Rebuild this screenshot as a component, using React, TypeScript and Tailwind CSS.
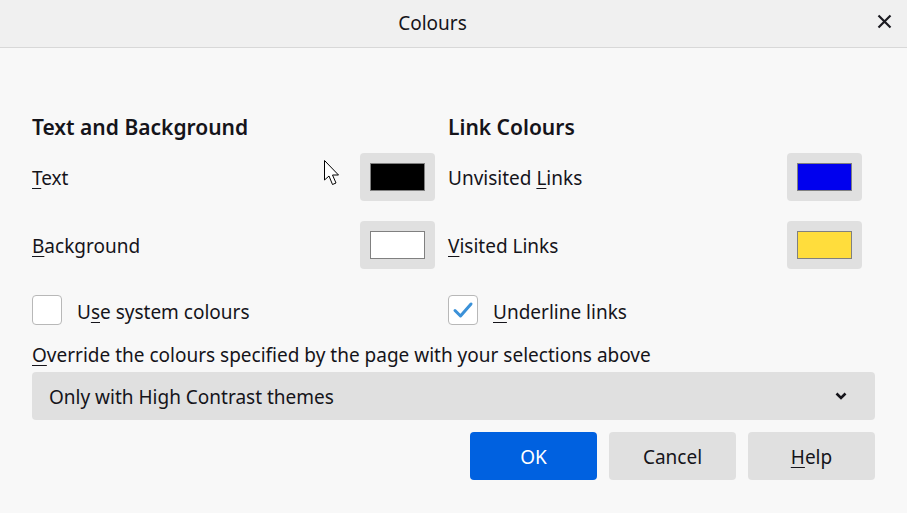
import React from 'react';

const FONT = { fontFamily: '"Noto Sans", "Open Sans", sans-serif' };

const Swatch = ({ color }: { color: string }) => (
  <button className="flex h-12 w-[75px] items-center justify-center rounded bg-[#e0e0e0] mr-[13px]">
    <span className="block h-[28px] w-[55px] border border-[#808080]" style={{ backgroundColor: color }} />
  </button>
);

const Checkbox = ({ checked }: { checked?: boolean }) => (
  <span className="flex h-[30px] w-[30px] items-center justify-center rounded border border-[#b8b8b8] bg-white">
    {checked && (
      <svg width="22" height="18" viewBox="0 0 22 18" fill="none">
        <path d="M3 9.5 L8.5 15 L19 3" stroke="#3b91d8" strokeWidth="3" strokeLinecap="round" strokeLinejoin="round" />
      </svg>
    )}
  </span>
);

const ColourRow = ({ label, color }: { label: React.ReactNode; color: string }) => (
  <div className="flex h-12 items-center justify-between">
    <span className="pt-[3px]">{label}</span>
    <Swatch color={color} />
  </div>
);

const App = () => {
  return (
    <div className="relative h-[513px] w-[907px] overflow-hidden bg-[#f8f8f8] text-[19px] text-[#15141a]" style={FONT}>
      {/* Title bar */}
      <div className="relative flex h-12 items-center justify-center border-b border-[#d8d8d8] bg-[#f0f0f0] pr-[42px]">
        <span className="text-[19px]">Colours</span>
        <button className="absolute right-[15px] top-[14px]">
          <svg width="15" height="15" viewBox="0 0 15 15">
            <path d="M1.5 1.5 L13.5 13.5 M13.5 1.5 L1.5 13.5" stroke="#1c1b22" strokeWidth="2.2" />
          </svg>
        </button>
      </div>

      <main className="px-8 pt-[64px]">
        <div className="grid grid-cols-[416px_1fr]">
          <section>
            <h2 className="mb-[11px] text-[21px] font-semibold leading-[30px]">Text and Background</h2>
            <ColourRow label={<><u className="underline-offset-[3px]">T</u>ext</>} color="#000000" />
            <div className="h-5" />
            <ColourRow label={<><u className="underline-offset-[3px]">B</u>ackground</>} color="#ffffff" />
            <label className="mt-[26px] flex h-[30px] items-center gap-[15px]">
              <Checkbox />
              <span className="pt-[3px] leading-[26px]">U<u className="underline-offset-[3px]">s</u>e system colours</span>
            </label>
          </section>
          <section>
            <h2 className="mb-[11px] text-[21px] font-semibold leading-[30px]">Link Colours</h2>
            <ColourRow label={<>Unvisited <u className="underline-offset-[3px]">L</u>inks</>} color="#0000ee" />
            <div className="h-5" />
            <ColourRow label={<><u className="underline-offset-[3px]">V</u>isited Links</>} color="#ffdd3c" />
            <label className="mt-[26px] flex h-[30px] items-center gap-[15px]">
              <Checkbox checked />
              <span className="pt-[3px] leading-[26px]"><u className="underline-offset-[3px]">U</u>nderline links</span>
            </label>
          </section>
        </div>

        <p className="mt-[17px] leading-[26px]">
          <u className="underline-offset-[3px]">O</u>verride the colours specified by the page with your selections above
        </p>
        <button className="mt-[4px] flex h-12 w-full items-center justify-between rounded bg-[#e0e0e0] pl-[17px] pr-[28px] text-left">
          <span className="pt-[3px]">Only with High Contrast themes</span>
          <svg width="12" height="8" viewBox="0 0 12 8">
            <path d="M1.5 1.5 L6 6 L10.5 1.5" stroke="#15141a" strokeWidth="2.6" fill="none" />
          </svg>
        </button>

        <div className="mt-3 flex justify-end gap-3">
          <button className="h-12 w-[127px] rounded bg-[#0061e0] pt-[2px] text-white">OK</button>
          <button className="h-12 w-[127px] rounded bg-[#e0e0e0] pt-[2px]">Cancel</button>
          <button className="h-12 w-[127px] rounded bg-[#e0e0e0] pt-[2px]"><u className="underline-offset-[3px]">H</u>elp</button>
        </div>
      </main>

      {/* mouse pointer */}
      <svg className="absolute left-[324px] top-[160px]" width="20" height="28" viewBox="0 0 20 28">
        <path d="M0.5 0.5 L0.5 20 L5 16 L8.5 24.5 L12 23 L8.5 15 L14.5 15 Z" fill="#ffffff" stroke="#000000" strokeWidth="1" strokeLinejoin="round" />
      </svg>
    </div>
  );
};

export default App;
